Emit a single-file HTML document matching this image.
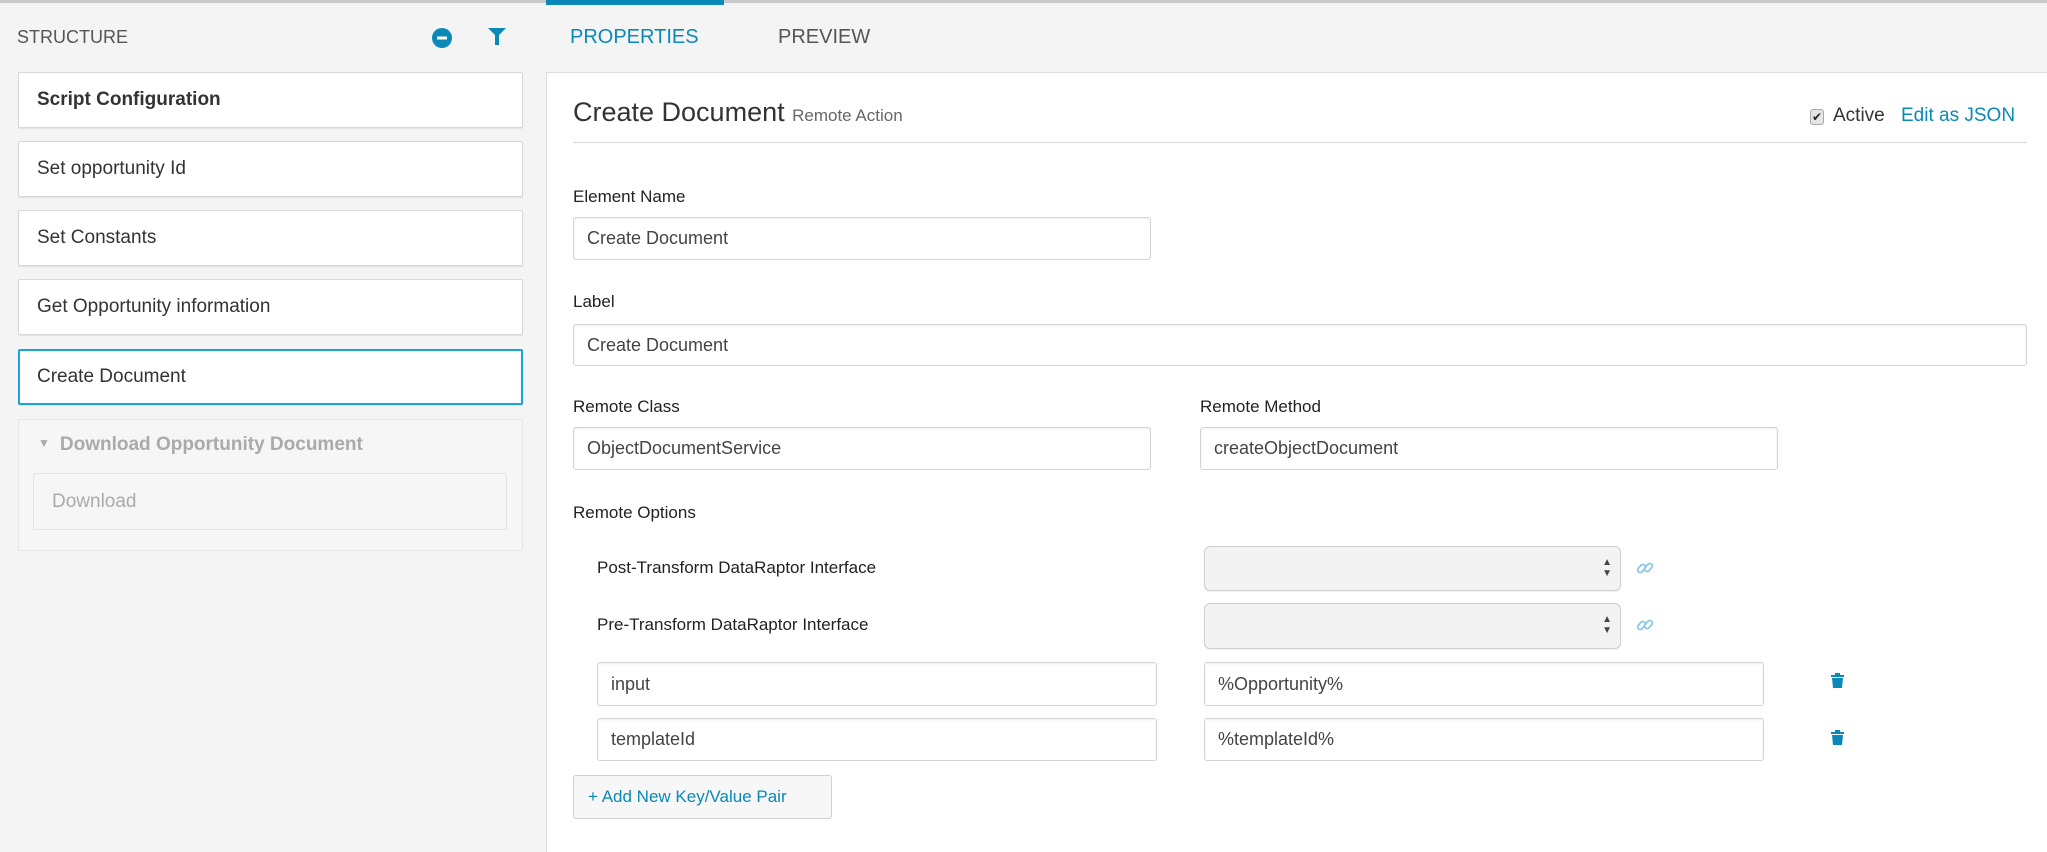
<!DOCTYPE html>
<html><head><meta charset="utf-8"><style>
*{box-sizing:border-box;margin:0;padding:0}
body{width:2047px;height:852px;overflow:hidden;background:#f4f4f4;font-family:"Liberation Sans",sans-serif;color:#333;position:relative}
.a{position:absolute}
.card{position:absolute;left:18px;width:505px;height:56px;background:#fff;border:1px solid #d8d8d8;border-radius:2px;box-shadow:0 1px 1px rgba(0,0,0,.08);font-size:19px;line-height:54px;padding-left:18px;color:#333}
.lbl{position:absolute;font-size:17px;color:#222}
.inp{position:absolute;background:#fff;border:1px solid #d4d4d4;border-radius:3px;box-shadow:inset 0 1px 2px rgba(0,0,0,.07);font-size:18px;color:#444;padding-left:13px;display:flex;align-items:center}
.sel{position:absolute;background:#f3f3f3;border:1px solid #cfcfcf;border-radius:6px;box-shadow:0 1px 1px rgba(0,0,0,.06)}
.blue{color:#0a89b8}
</style></head><body>
<div class="a" style="left:0;top:0;width:2047px;height:3px;background:#c9c9c9"></div>
<div class="a" style="left:546px;top:0;width:178px;height:5px;background:#0a89b8"></div>
<div class="a" style="left:17px;top:27px;font-size:18px;color:#555">STRUCTURE</div>
<svg class="a" style="left:431px;top:27px" width="22" height="22"><circle cx="11" cy="11" r="10" fill="#0a89b8"/><rect x="6" y="9.5" width="10" height="3" fill="#fff"/></svg>
<svg class="a" style="left:487px;top:27px" width="20" height="19"><path d="M1 1H19L12 8V18H8V8Z" fill="#0a89b8"/></svg>
<div class="a blue" style="left:570px;top:26px;font-size:20px">PROPERTIES</div>
<div class="a" style="left:778px;top:26px;font-size:20px;color:#555">PREVIEW</div>

<div class="card" style="top:72px;font-weight:bold">Script Configuration</div>
<div class="card" style="top:141px">Set opportunity Id</div>
<div class="card" style="top:210px">Set Constants</div>
<div class="card" style="top:279px">Get Opportunity information</div>
<div class="card" style="top:349px;border:2px solid #1ba2dd;padding-left:17px;line-height:52px">Create Document</div>
<div class="a" style="left:18px;top:419px;width:505px;height:132px;border:1px solid #e6e6e6;border-radius:2px;background:#f6f6f6"></div>
<div class="a" style="left:38px;top:434px;font-size:19px;color:#aaa;font-weight:bold"><span style="font-size:12px;vertical-align:3px;margin-right:10px">▼</span>Download Opportunity Document</div>
<div class="a" style="left:33px;top:473px;width:474px;height:57px;border:1px solid #e2e2e2;border-radius:2px;background:#f6f6f6;font-size:19px;color:#aaa;line-height:55px;padding-left:18px">Download</div>

<div class="a" style="left:546px;top:72px;width:1501px;height:780px;background:#fff;border-left:1px solid #ddd;border-top:1px solid #ddd"></div>
<div class="a" style="left:573px;top:97px;font-size:27px;color:#333">Create Document <span style="font-size:17px;color:#666">Remote Action</span></div>
<div class="a" style="left:1810px;top:109px;width:14px;height:16px;border:1px solid #aaa;border-radius:3px;background:#e4e4e4;font-size:12px;line-height:14px;text-align:center;color:#222">✔</div>
<div class="a" style="left:1833px;top:105px;font-size:19px">Active</div>
<div class="a blue" style="left:1901px;top:105px;font-size:19px">Edit as JSON</div>
<div class="a" style="left:573px;top:142px;width:1454px;height:1px;background:#d8d8d8"></div>

<div class="lbl" style="left:573px;top:187px">Element Name</div>
<div class="inp" style="left:573px;top:217px;width:578px;height:43px">Create Document</div>
<div class="lbl" style="left:573px;top:292px">Label</div>
<div class="inp" style="left:573px;top:324px;width:1454px;height:42px">Create Document</div>
<div class="lbl" style="left:573px;top:397px">Remote Class</div>
<div class="inp" style="left:573px;top:427px;width:578px;height:43px">ObjectDocumentService</div>
<div class="lbl" style="left:1200px;top:397px">Remote Method</div>
<div class="inp" style="left:1200px;top:427px;width:578px;height:43px">createObjectDocument</div>
<div class="lbl" style="left:573px;top:503px">Remote Options</div>

<div class="lbl" style="left:597px;top:558px">Post-Transform DataRaptor Interface</div>
<div class="sel" style="left:1204px;top:546px;width:417px;height:45px"><div class="a" style="right:8px;top:10px;font-size:10px;line-height:11px;color:#444">▲<br>▼</div></div>
<svg class="a" style="left:1636px;top:559px" width="18" height="18" fill="none" stroke="#8cc8e6" stroke-width="1.8"><rect x="1" y="7" width="9" height="5" rx="2.5" transform="rotate(-50 5.5 9.5)"/><rect x="8" y="6" width="9" height="5" rx="2.5" transform="rotate(-50 12.5 8.5)"/></svg>
<div class="lbl" style="left:597px;top:615px">Pre-Transform DataRaptor Interface</div>
<div class="sel" style="left:1204px;top:603px;width:417px;height:46px"><div class="a" style="right:8px;top:10px;font-size:10px;line-height:11px;color:#444">▲<br>▼</div></div>
<svg class="a" style="left:1636px;top:616px" width="18" height="18" fill="none" stroke="#8cc8e6" stroke-width="1.8"><rect x="1" y="7" width="9" height="5" rx="2.5" transform="rotate(-50 5.5 9.5)"/><rect x="8" y="6" width="9" height="5" rx="2.5" transform="rotate(-50 12.5 8.5)"/></svg>

<div class="inp" style="left:597px;top:662px;width:560px;height:44px">input</div>
<div class="inp" style="left:1204px;top:662px;width:560px;height:44px">%Opportunity%</div>
<svg class="a" style="left:1831px;top:673px" width="13" height="15"><rect x="0" y="2" width="13" height="2" fill="#0a89b8"/><rect x="4" y="0" width="5" height="2" fill="#0a89b8"/><path d="M1 5H12L11 15H2Z" fill="#0a89b8"/></svg>
<div class="inp" style="left:597px;top:718px;width:560px;height:43px">templateId</div>
<div class="inp" style="left:1204px;top:718px;width:560px;height:43px">%templateId%</div>
<svg class="a" style="left:1831px;top:730px" width="13" height="15"><rect x="0" y="2" width="13" height="2" fill="#0a89b8"/><rect x="4" y="0" width="5" height="2" fill="#0a89b8"/><path d="M1 5H12L11 15H2Z" fill="#0a89b8"/></svg>

<div class="a blue" style="left:573px;top:775px;width:259px;height:44px;border:1px solid #d0d0d0;border-radius:3px;background:#f7f7f7;font-size:17px;line-height:42px;padding-left:14px">+ Add New Key/Value Pair</div>
</body></html>
